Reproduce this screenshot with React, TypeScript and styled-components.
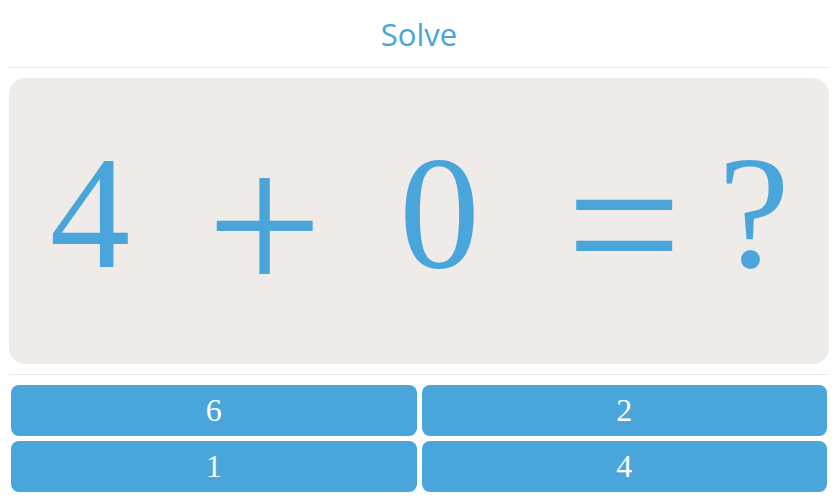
import React from 'react';
import styled, { createGlobalStyle } from 'styled-components';

const GlobalStyle = createGlobalStyle`
  html, body {
    margin: 0;
    padding: 0;
    background: #ffffff;
  }
  body {
    font-family: 'Open Sans', 'Liberation Sans', sans-serif;
  }
`;

const blue = '#4aa6da';

const Page = styled.div`
  width: 840px;
  height: 501px;
  box-sizing: border-box;
  padding: 0 11px 0 9px;
  display: flex;
  flex-direction: column;
`;

const Header = styled.div`
  height: 67px;
  display: flex;
  align-items: center;
  justify-content: center;
  border-bottom: 1px solid #ebebeb;
  font-family: 'Open Sans', sans-serif;
  font-size: 31px;
  color: ${blue};
`;

const Card = styled.div`
  margin-top: 10px;
  height: 286px;
  box-sizing: border-box;
  padding-bottom: 16px;
  border-radius: 16px;
  background-color: #efebe8;
  display: grid;
  grid-template-columns: 162px 187px 163px 206px 54px;
  align-items: center;
`;

// digits and operators are set at different sizes in the reference
const Token = styled.span<{ $op?: boolean }>`
  display: flex;
  justify-content: center;
  font-family: 'Liberation Serif', 'Times New Roman', serif;
  font-size: ${({ $op }) => ($op ? '206px' : '161px')};
  line-height: 1;
  color: ${blue};
  white-space: nowrap;
  transform: translateY(${({ $op }) => ($op ? '12px' : '0')});
`;

const Divider = styled.div`
  margin-top: 10px;
  height: 1px;
  background-color: #ebebeb;
`;

const Answers = styled.div`
  margin-top: 10px;
  padding: 0 2px;
  display: grid;
  grid-template-columns: 1fr 1fr;
  grid-template-rows: 51px 51px;
  gap: 5px;
`;

const AnswerButton = styled.button`
  border: none;
  border-radius: 8px;
  background-color: ${blue};
  color: #ffffff;
  font-family: 'Liberation Serif', 'Times New Roman', serif;
  font-size: 32px;
  padding: 0;
  cursor: pointer;
`;

const answers = [6, 2, 1, 4];

export default function App() {
  return (
    <>
      <GlobalStyle />
      <Page>
        <Header>Solve</Header>
        <Card>
          <Token>4</Token>
          <Token $op>+</Token>
          <Token>0</Token>
          <Token $op>=</Token>
          <Token>?</Token>
        </Card>
        <Divider />
        <Answers>
          {answers.map((a) => (
            <AnswerButton key={a}>{a}</AnswerButton>
          ))}
        </Answers>
      </Page>
    </>
  );
}
